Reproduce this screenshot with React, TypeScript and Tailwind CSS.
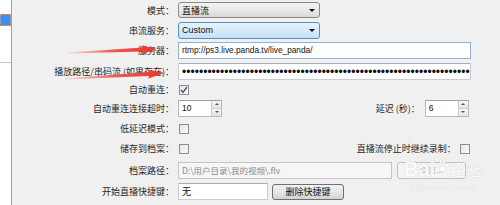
import React from 'react';

const cjk = { fontFamily: '"Noto Sans CJK SC", "Noto Sans", sans-serif' };
const latin = { fontFamily: '"Liberation Sans", Arial, "Noto Sans CJK SC", sans-serif' };

function Row({
  label,
  h,
  children,
}: {
  label: string;
  h: string;
  children?: React.ReactNode;
}) {
  return (
    <div className={`flex items-center pr-[31px] ${h}`}>
      <div className="w-[162px] shrink-0 text-right text-[9px] leading-none text-[#262626]" style={cjk}>
        {label}
      </div>
      <div className="ml-[4px] flex flex-1 items-center">{children}</div>
    </div>
  );
}

function Combo({ text, blue, h }: { text: string; blue?: boolean; h: string }) {
  return (
    <div
      className={`flex w-[142px] ${h} items-center justify-between rounded-[3px] border pl-[3px] pr-[4px] ${
        blue
          ? 'border-[#5b8fbf] bg-gradient-to-b from-[#e6f2fc] via-[#d6eaf9] to-[#c4e1f6]'
          : 'border-[#8a8a8a] bg-gradient-to-b from-[#f3f3f3] via-[#e9e9e9] to-[#d9d9d9]'
      }`}
    >
      <span className="text-[9px] leading-none text-[#111]" style={blue ? latin : cjk}>
        {text}
      </span>
      <span className="h-0 w-0 border-x-[3px] border-t-[3px] border-x-transparent border-t-[#111]" />
    </div>
  );
}

function Check({ checked }: { checked?: boolean }) {
  return (
    <div className="ml-[1px] flex h-[10px] w-[10px] items-center justify-center border border-[#8f8f8f] bg-gradient-to-br from-[#e4e4e4] to-[#fbfbfb]">
      {checked && (
        <svg width="8" height="8" viewBox="0 0 8 8">
          <path d="M1 4 L3 6.3 L7 1" fill="none" stroke="#3d5a8a" strokeWidth="1.4" />
        </svg>
      )}
    </div>
  );
}

function Spin({ value }: { value: string }) {
  return (
    <div className="flex h-[17px] w-[44px] border border-[#b5b9c0] border-t-[#9ba0a8] bg-white">
      <span className="flex-1 pl-[3px] pt-[3px] text-[8.5px] leading-none text-[#111]" style={latin}>
        {value}
      </span>
      <div className="flex w-[10px] flex-col border-l border-[#c9ccd1]">
        <div className="flex flex-1 items-center justify-center border-b border-[#c9ccd1] bg-gradient-to-b from-[#f7f7f7] to-[#e3e3e3]">
          <span className="h-0 w-0 border-x-[2px] border-b-[2px] border-x-transparent border-b-[#4a5a70]" />
        </div>
        <div className="flex flex-1 items-center justify-center bg-gradient-to-b from-[#f7f7f7] to-[#e3e3e3]">
          <span className="h-0 w-0 border-x-[2px] border-t-[2px] border-x-transparent border-t-[#4a5a70]" />
        </div>
      </div>
    </div>
  );
}

function Arrow({ x, y, len, angle, head }: { x: number; y: number; len: number; angle: number; head: number }) {
  const b = len - head;
  return (
    <g transform={`translate(${x} ${y}) rotate(${angle})`}>
      <polygon
        points={`0,-0.6 ${b},-2 ${b - 1},-4.5 ${len},0 ${b - 1},4.5 ${b},2 0,0.6`}
        fill="url(#redfade)"
      />
    </g>
  );
}

export default function App() {
  const dots = '•'.repeat(68);
  return (
    <div className="relative flex h-[205px] w-[500px] overflow-hidden bg-[#f0f0f0]">
      {/* barra lateral */}
      <div className="relative w-[12px] shrink-0 border-r border-[#a0a0a0] bg-white">
        <div className="absolute left-0 top-[14px] h-[12px] w-[11px] border border-dotted border-[#e9a06a] bg-[#3b8ff0]" />
        <div className="absolute left-0 top-[62px] h-px w-[11px] bg-[#c4c4c4]" />
      </div>

      <div className="flex flex-1 flex-col">
        <Row label="模式：" h="h-[20px]">
          <Combo text="直播流" h="h-[16px]" />
        </Row>
        <Row label="串流服务：" h="h-[21px]">
          <Combo text="Custom" blue h="h-[17px]" />
        </Row>
        <Row label="服务器：" h="h-[19px]">
          <div className="flex h-[17px] flex-1 items-center border border-[#8fb2d6] bg-white pl-[3px]">
            <span className="text-[8.3px] leading-none text-[#111]" style={latin}>
              rtmp://ps3.live.panda.tv/live_panda/
            </span>
          </div>
        </Row>
        <Row label="播放路径/串码流 (如果存在)：" h="h-[23px]">
          <div className="flex h-[17px] flex-1 items-center overflow-hidden border border-[#c9cdd3] border-t-[#abadb3] bg-white pl-[3px]">
            <span className="whitespace-nowrap text-[12px] leading-none tracking-[0.03px] text-[#111]" style={latin}>
              {dots}
            </span>
          </div>
        </Row>
        <Row label="自动重连：" h="h-[13px]">
          <Check checked />
        </Row>
        <Row label="自动重连连接超时：" h="h-[24px]">
          <Spin value="10" />
          <div className="ml-auto mr-[2px] flex items-center">
            <span className="mr-[5px] text-[9px] leading-none text-[#262626]" style={cjk}>
              延迟 (秒)：
            </span>
            <Spin value="6" />
          </div>
        </Row>
        <Row label="低延迟模式：" h="h-[17px]">
          <Check />
        </Row>
        <Row label="储存到档案：" h="h-[23px]">
          <Check />
          <div className="ml-auto mr-[1px] flex items-center">
            <span className="mr-[3px] text-[9px] leading-none text-[#262626]" style={cjk}>
              直播流停止时继续录制：
            </span>
            <Check />
          </div>
        </Row>
        <Row label="档案路径：" h="h-[20px]">
          <div className="flex h-[17px] w-[214px] items-center border border-[#c2c5ca] bg-[#f6f6f6] pl-[3px]">
            <span className="text-[8.5px] leading-none text-[#8a8a8a]" style={cjk}>
              D:\用户目录\我的视频\.flv
            </span>
          </div>
          <div className="ml-[5px] mr-[2px] flex h-[17px] w-[69px] items-center justify-start rounded-[3px] border border-[#c0c0c0] bg-[#f4f4f4] pl-[22px]">
            <span className="text-[8px] leading-none text-[#b0b0b0]" style={cjk}>
              浏览...
            </span>
          </div>
        </Row>
        <Row label="开始直播快捷键：" h="h-[23px]">
          <div className="flex h-[17px] w-[90px] items-center border border-[#c9cdd3] border-t-[#abadb3] bg-white pl-[3px]">
            <span className="text-[9px] leading-none text-[#111]" style={cjk}>
              无
            </span>
          </div>
          <div className="ml-[4px] flex h-[16px] w-[72px] items-center justify-center rounded-[3px] border border-[#707070] bg-gradient-to-b from-[#f2f2f2] via-[#e6e6e6] to-[#d3d3d3]">
            <span className="text-[9px] leading-none text-[#111]" style={cjk}>
              删除快捷键
            </span>
          </div>
        </Row>
      </div>

      {/* setas de anotação */}
      <svg className="pointer-events-none absolute left-0 top-0" width="500" height="205">
        <defs>
          <linearGradient id="redfade" x1="0" y1="0" x2="1" y2="0">
            <stop offset="0" stopColor="#f4a19a" stopOpacity="0.4" />
            <stop offset="0.5" stopColor="#ec5a4f" />
            <stop offset="1" stopColor="#e8352b" />
          </linearGradient>
        </defs>
        <Arrow x={68} y={53} len={89} angle={-2.6} head={14} />
        <Arrow x={65} y={79} len={100} angle={-3.4} head={16} />
      </svg>

      {/* marca d'água */}
      <div className="pointer-events-none absolute left-[404px] top-[159px] flex flex-col items-center opacity-80">
        <div className="flex items-center leading-none text-white [text-shadow:0_0_1px_#bbb]">
          <span className="text-[20px] font-bold" style={latin}>Bai</span>
          <svg width="13" height="14" viewBox="0 0 13 14" className="mx-[1px] -mt-[6px]">
            <g fill="#fff" stroke="#c8c8c8" strokeWidth="0.4">
              <ellipse cx="2.5" cy="6" rx="1.6" ry="2" />
              <ellipse cx="5" cy="2.5" rx="1.6" ry="2" />
              <ellipse cx="8.5" cy="2.5" rx="1.6" ry="2" />
              <ellipse cx="11" cy="6" rx="1.6" ry="2" />
              <ellipse cx="6.8" cy="10" rx="3.2" ry="3" />
            </g>
          </svg>
          <span className="text-[16px]" style={cjk}>经验</span>
        </div>
        <div className="mt-[4px] text-[9px] leading-none text-white [text-shadow:0_0_1px_#bbb]" style={{ fontFamily: '"Liberation Serif", serif' }}>
          jingyan.baidu.com
        </div>
      </div>
    </div>
  );
}
